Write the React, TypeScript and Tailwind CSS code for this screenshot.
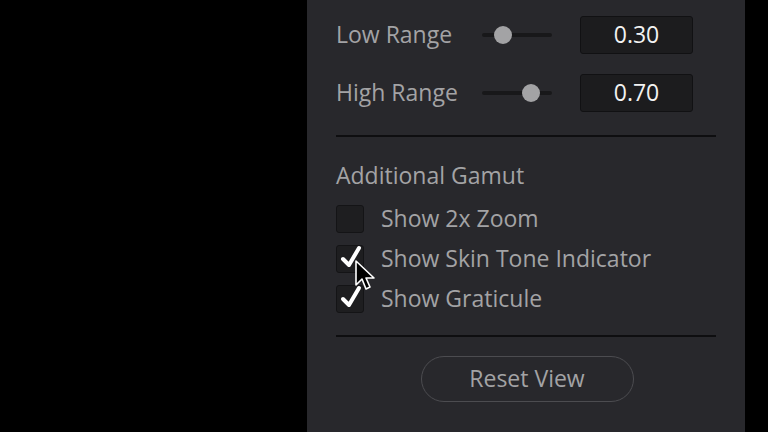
import React from "react";

const font = { fontFamily: '"Open Sans", "Noto Sans", sans-serif' };

function Slider({ pos }: { pos: number }) {
  return (
    <div className="relative h-[18px] w-[70px]">
      <div className="absolute left-0 right-0 top-[7px] h-[4px] rounded-full bg-[#18181a]" />
      <div
        className="absolute top-0 h-[18px] w-[18px] rounded-full bg-[#a3a3a5]"
        style={{ left: pos - 9 }}
      />
    </div>
  );
}

function RangeRow({ label, pos, value }: { label: string; pos: number; value: string }) {
  return (
    <div className="flex h-[38px] items-center">
      <span className="mt-[-2px] w-[146px] text-[23px] text-[#a3a3a5]">{label}</span>
      <Slider pos={pos} />
      <div className="ml-[28px] flex h-[38px] w-[113px] items-center justify-center rounded-[3px] border border-[#111113] bg-[#1c1c1e] text-[23px] text-[#f2f2f2]">
        <span className="mt-[-2px]">{value}</span>
      </div>
    </div>
  );
}

function Check({ checked, label }: { checked: boolean; label: string }) {
  return (
    <div className="flex h-[40px] items-center">
      <div className="relative h-[28px] w-[28px] rounded-[3px] border border-[#141416] bg-[#1e1e20]">
        {checked && (
          <svg className="absolute left-[2px] top-[-4px]" width="26" height="28" viewBox="0 0 26 28">
            <path d="M4 17 L10 23 L20 6" fill="none" stroke="#fff" strokeWidth="4" strokeLinecap="round" strokeLinejoin="round" />
          </svg>
        )}
      </div>
      <span className="ml-[17px] mt-[-2px] text-[23px] text-[#a3a3a5]">{label}</span>
    </div>
  );
}

export default function App() {
  return (
    <div className="flex h-[432px] w-[768px] bg-black" style={font}>
      <div className="w-[307px]" />
      <div className="relative flex h-full w-[438px] flex-col bg-[#28282c] px-[29px]">
        <div className="mt-[16px] flex flex-col gap-[20px]">
          <RangeRow label="Low Range" pos={21} value="0.30" />
          <RangeRow label="High Range" pos={49} value="0.70" />
        </div>
        <div className="mt-[23px] h-[2px] w-[380px] bg-[#0e0e10]" />
        <div className="mt-[23px] text-[23px] leading-[30px] text-[#a3a3a5]">Additional Gamut</div>
        <div className="mt-[9px] flex flex-col">
          <Check checked={false} label="Show 2x Zoom" />
          <Check checked={true} label="Show Skin Tone Indicator" />
          <Check checked={true} label="Show Graticule" />
        </div>
        <div className="mt-[16px] h-[2px] w-[380px] bg-[#0e0e10]" />
        <div className="mt-[19px] flex w-[380px] justify-center">
          <button className="ml-[2px] h-[46px] w-[213px] rounded-full border border-[#4c4c50] text-[23px] text-[#a3a3a5]">
            <span className="relative top-[-1px]">Reset View</span>
          </button>
        </div>
        <svg className="absolute left-[47px] top-[259px]" width="24" height="34" viewBox="0 0 24 34">
          <path d="M2 2 L2 26 L8 20 L12 30 L16 28 L12 19 L20 19 Z" fill="#000" stroke="#fff" strokeWidth="1.6" strokeLinejoin="round" />
        </svg>
      </div>
    </div>
  );
}
